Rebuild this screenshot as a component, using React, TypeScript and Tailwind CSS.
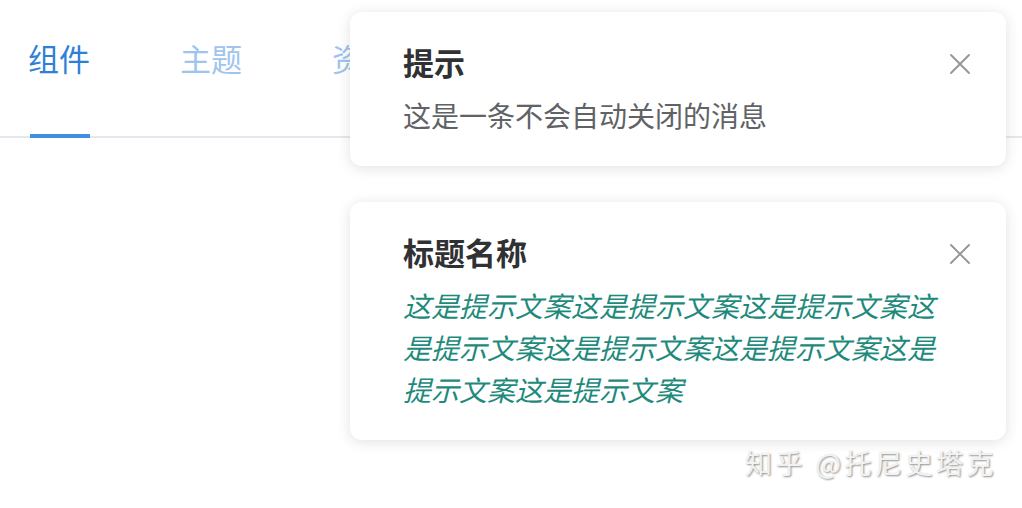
import React from "react";

const font = "font-['Noto_Sans_CJK_SC','Noto_Sans',sans-serif]";

function CloseIcon() {
  return (
    <svg width="22" height="22" viewBox="0 0 22 22" className="shrink-0 mt-[4px]">
      <path d="M2 2 L20 20 M20 2 L2 20" stroke="#909399" strokeWidth="1.8" strokeLinecap="round" fill="none" />
    </svg>
  );
}

function Notice({ title, children }: { title: string; children: React.ReactNode }) {
  return (
    <div className="w-[656px] rounded-[12px] bg-white pl-[53px] pr-[35px] pt-[30px] pb-[30px] shadow-[0_2px_14px_rgba(0,0,0,0.12)]">
      <div className="flex items-center justify-between">
        <h2 className="text-[31px] leading-[40px] font-bold text-[#303133]">{title}</h2>
        <CloseIcon />
      </div>
      <div className="mt-[12px]">{children}</div>
    </div>
  );
}

export default function App() {
  const tabs = ["组件", "主题", "资源"];
  return (
    <div className={`relative w-[1022px] h-[508px] overflow-hidden bg-white ${font}`}>
      <div className="relative h-[138px] border-b-2 border-[#e4e7ed]">
        <div className="flex gap-[90px] pl-[28px] pt-[38px]">
          {tabs.map((t, i) => (
            <div key={t} className="relative w-[62px]">
              <span
                className={`text-[31px] leading-[40px] whitespace-nowrap ${
                  i === 0 ? "text-[#2f7fd6]" : "text-[#9fc5ee]"
                }`}
              >
                {t}
              </span>
            </div>
          ))}
        </div>
        <div className="absolute left-[30px] bottom-[-2px] h-[4px] w-[60px] bg-[#3f8fe3]" />
      </div>

      <div className="absolute left-[350px] top-[12px] flex flex-col gap-[36px]">
        <Notice title="提示">
          <p className="text-[28px] leading-[42px] text-[#606266]">这是一条不会自动关闭的消息</p>
        </Notice>
        <Notice title="标题名称">
          <p className="w-[545px] text-[28px] leading-[42px] italic text-[#1e8a7c]">
            这是提示文案这是提示文案这是提示文案这是提示文案这是提示文案这是提示文案这是提示文案这是提示文案
          </p>
        </Notice>
      </div>

      <div className="absolute left-[745px] top-[446px] text-[27px] leading-[34px] tracking-[3.5px] text-[#f2f2f2] [text-shadow:1px_1px_2px_rgba(0,0,0,0.45)]">
        知乎 @托尼史塔克
      </div>
    </div>
  );
}
